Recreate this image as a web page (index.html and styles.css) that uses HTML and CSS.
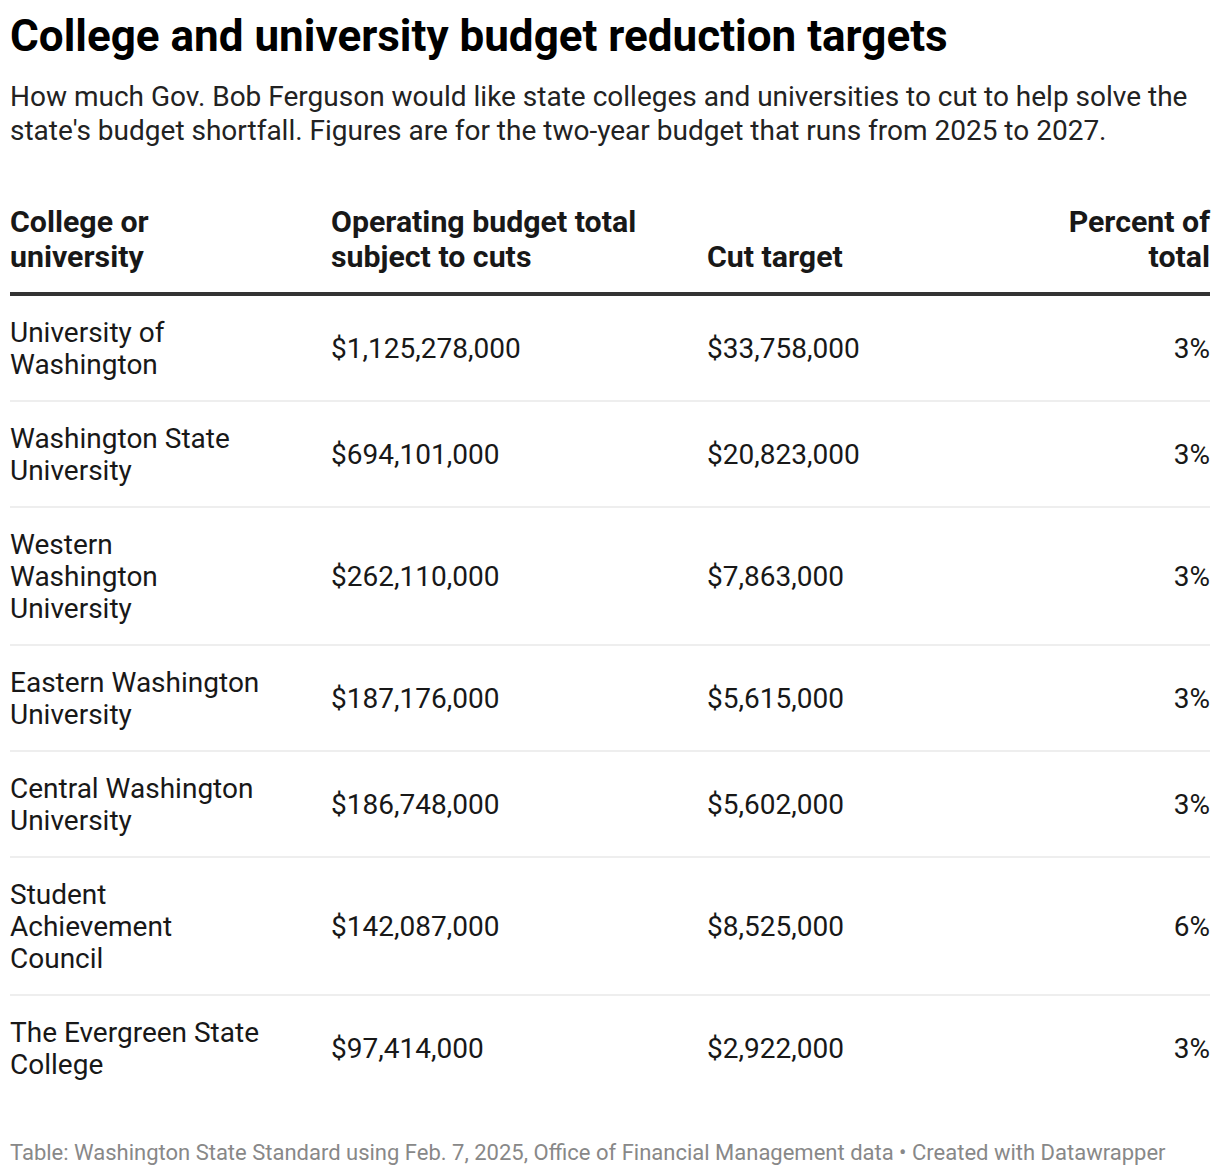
FILE: index.html
```html
<!DOCTYPE html>
<html>
<head>
<meta charset="utf-8">
<link rel="stylesheet" href="styles.css">
</head>
<body>
<div class="chart">
  <h1 class="title">College and university budget reduction targets</h1>
  <p class="desc">How much Gov. Bob Ferguson would like state colleges and universities to cut to help solve the state's budget shortfall. Figures are for the two-year budget that runs from 2025 to 2027.</p>
  <table class="tbl">
    <thead>
      <tr>
        <th class="c1">College or university</th>
        <th class="c2">Operating budget total subject to cuts</th>
        <th class="c3">Cut target</th>
        <th class="c4">Percent of total</th>
      </tr>
    </thead>
    <tbody>
      <tr><td class="c1">University of Washington</td><td class="c2">$1,125,278,000</td><td class="c3">$33,758,000</td><td class="c4">3%</td></tr>
      <tr><td class="c1">Washington State University</td><td class="c2">$694,101,000</td><td class="c3">$20,823,000</td><td class="c4">3%</td></tr>
      <tr><td class="c1">Western Washington University</td><td class="c2">$262,110,000</td><td class="c3">$7,863,000</td><td class="c4">3%</td></tr>
      <tr><td class="c1">Eastern Washington University</td><td class="c2">$187,176,000</td><td class="c3">$5,615,000</td><td class="c4">3%</td></tr>
      <tr><td class="c1">Central Washington University</td><td class="c2">$186,748,000</td><td class="c3">$5,602,000</td><td class="c4">3%</td></tr>
      <tr><td class="c1">Student Achievement Council</td><td class="c2">$142,087,000</td><td class="c3">$8,525,000</td><td class="c4">6%</td></tr>
      <tr class="last"><td class="c1">The Evergreen State College</td><td class="c2">$97,414,000</td><td class="c3">$2,922,000</td><td class="c4">3%</td></tr>
    </tbody>
  </table>
  <div class="footer">Table: Washington State Standard using Feb. 7, 2025, Office of Financial Management data • Created with Datawrapper</div>
</div>
</body>
</html>
```

FILE: styles.css
```css
html, body {
  margin: 0;
  padding: 0;
  background: #ffffff;
}
.chart {
  padding: 10px 10px 0 10px;
  font-family: Roboto, "Liberation Sans", sans-serif;
  color: #181818;
}
.title {
  margin: 0;
  font-size: 44px;
  line-height: 52px;
  font-weight: 700;
  color: #000;
}
.desc {
  margin: 18px 0 0 0;
  font-size: 28px;
  line-height: 34px;
  color: #222;
}
.tbl {
  margin-top: 56px;
  width: 100%;
  border-collapse: collapse;
  table-layout: fixed;
}
.tbl th, .tbl td {
  box-sizing: border-box;
}
.tbl th {
  font-size: 30.3px;
  line-height: 35px;
  font-weight: 700;
  color: #181818;
  vertical-align: bottom;
  text-align: left;
  padding: 0 0 18px 0;
  border-bottom: 4px solid #333;
}
.tbl td {
  font-size: 28px;
  line-height: 32px;
  vertical-align: middle;
  text-align: left;
  padding: 21px 0 19px 0;
  border-bottom: 2px solid #eeeeee;
}
.tbl tr.last td {
  border-bottom: none;
}
.tbl .c1 { width: 321px; padding-right: 68px; }
.tbl .c2 { width: 376px; padding-right: 20px; }
.tbl .c3 { width: 300px; padding-right: 20px; }
.tbl .c4 { text-align: right; }
.footer {
  margin-top: 40px;
  font-size: 22px;
  line-height: 26px;
  color: #888;
}
```
